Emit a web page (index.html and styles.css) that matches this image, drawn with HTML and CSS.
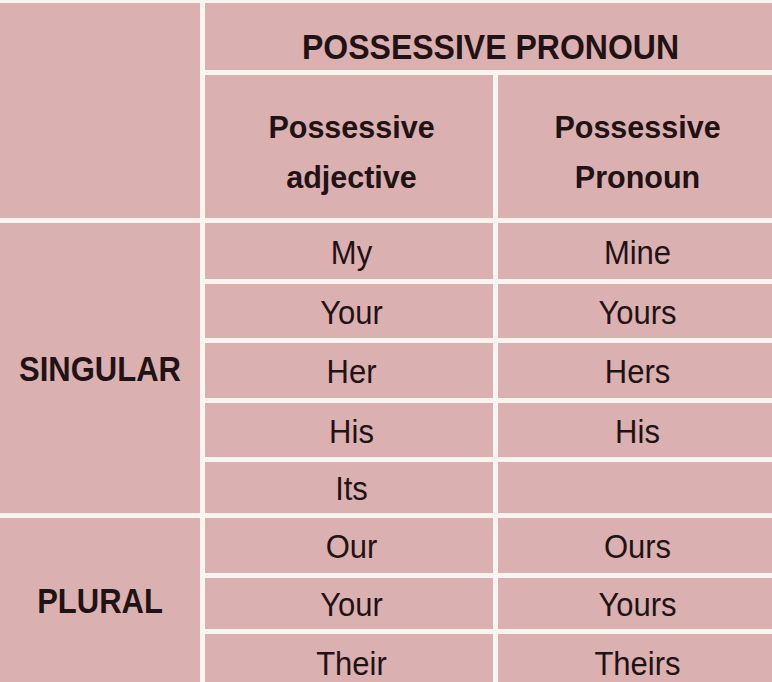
FILE: index.html
```html
<!DOCTYPE html>
<html lang="en">
<head>
<meta charset="utf-8">
<title>Possessive Pronoun</title>
<link rel="stylesheet" href="styles.css">
</head>
<body>
<div class="table">
  <div class="cell corner"></div>
  <div class="cell title"><span class="txt">POSSESSIVE PRONOUN</span></div>
  <div class="cell sub sub-a"><span class="txt">Possessive<br>adjective</span></div>
  <div class="cell sub sub-b"><span class="txt">Possessive<br>Pronoun</span></div>

  <div class="cell group singular"><span class="txt">SINGULAR</span></div>
  <div class="cell word"><span class="txt">My</span></div><div class="cell word"><span class="txt">Mine</span></div>
  <div class="cell word"><span class="txt">Your</span></div><div class="cell word"><span class="txt">Yours</span></div>
  <div class="cell word"><span class="txt">Her</span></div><div class="cell word"><span class="txt">Hers</span></div>
  <div class="cell word"><span class="txt">His</span></div><div class="cell word"><span class="txt">His</span></div>
  <div class="cell word"><span class="txt">Its</span></div><div class="cell word"></div>

  <div class="cell group plural"><span class="txt">PLURAL</span></div>
  <div class="cell word"><span class="txt">Our</span></div><div class="cell word"><span class="txt">Ours</span></div>
  <div class="cell word"><span class="txt">Your</span></div><div class="cell word"><span class="txt">Yours</span></div>
  <div class="cell word"><span class="txt">Their</span></div><div class="cell word"><span class="txt">Theirs</span></div>
</div>
</body>
</html>
```

FILE: styles.css
```css
html, body {
  margin: 0;
  padding: 0;
  background: #fbf5f1;
  overflow: hidden;
}

.table {
  display: grid;
  grid-template-columns: 200px 288px 274px;
  grid-template-rows: 67px 143px 56px 54px 55px 54px 51px 55px 51px 56px;
  gap: 5px;
  padding-top: 3px;
  width: 772px;
  background: #fbf5f1;
  font-family: "Liberation Sans", Arial, sans-serif;
  color: #211214;
}

.cell {
  background: #dbb0b1;
  display: flex;
  align-items: center;
  justify-content: center;
  text-align: center;
  box-sizing: border-box;
}

.txt {
  display: inline-block;
}

.corner {
  grid-column: 1;
  grid-row: 1 / 3;
}

.title {
  grid-column: 2 / 4;
  grid-row: 1;
  font-weight: bold;
  font-size: 32px;
  padding-top: 22px;
  padding-left: 4px;
}

.title .txt { transform: scaleY(1.08); }

.sub {
  grid-row: 2;
  font-weight: bold;
  font-size: 30.5px;
  line-height: 50px;
  padding-top: 10px;
  padding-left: 5px;
}

.sub-a { grid-column: 2; }
.sub-b { grid-column: 3; }

.group {
  grid-column: 1;
  font-weight: bold;
  font-size: 31px;
}

.group .txt { transform: scaleY(1.12); }

.singular { grid-row: 3 / 8; padding-top: 4px; }
.plural { grid-row: 8 / 11; padding-bottom: 4px; }

.word {
  font-size: 31px;
  padding-top: 3px;
  padding-left: 5px;
}

.word .txt { transform: scaleY(1.06); }
```
